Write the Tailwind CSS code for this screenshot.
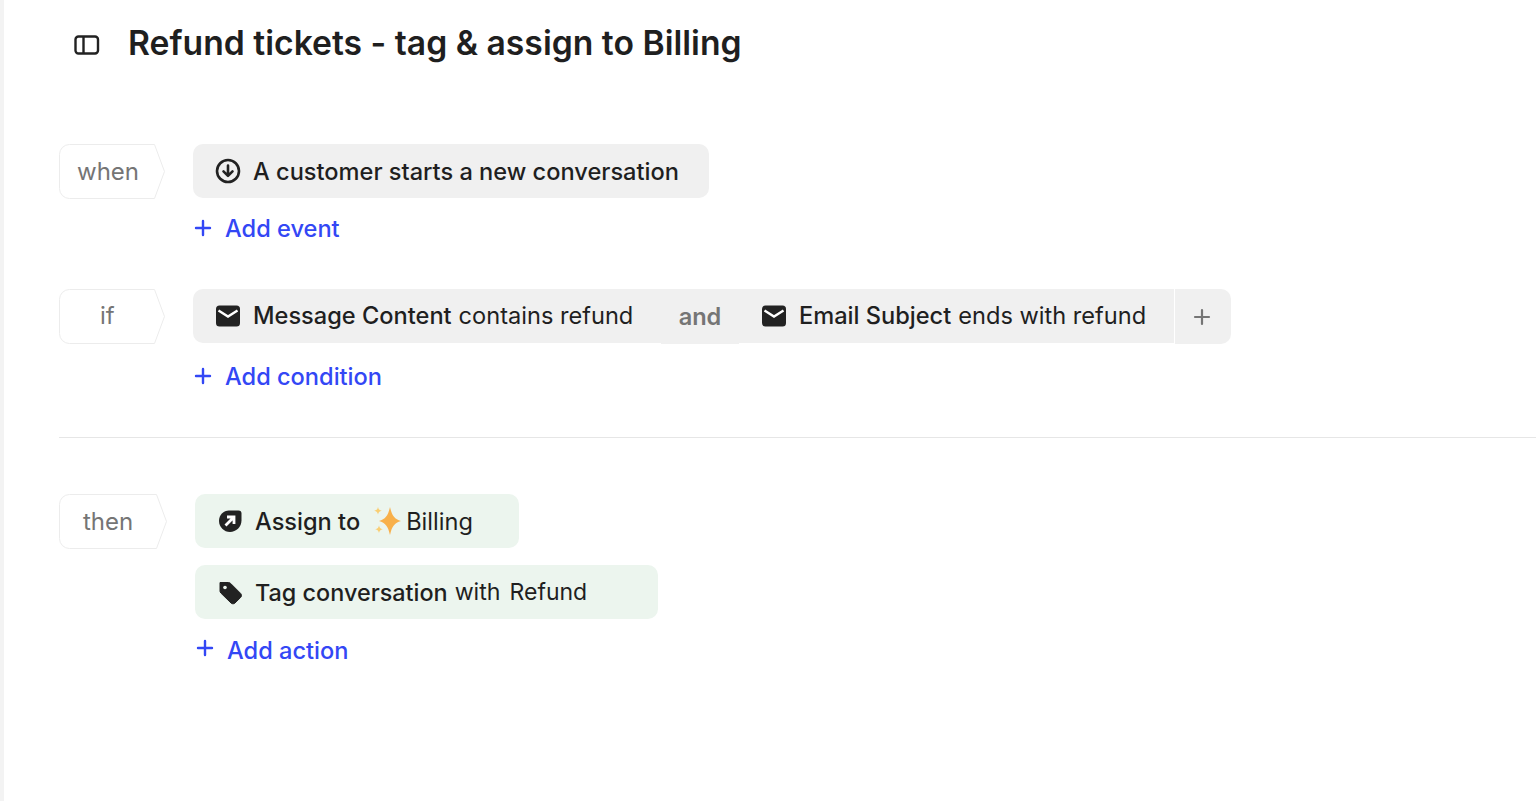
<!DOCTYPE html>
<html>
<head>
<meta charset="utf-8">
<script src="https://cdn.jsdelivr.net/npm/@tailwindcss/browser@4"></script>
</head>
<body class="bg-white font-['Inter',sans-serif] text-[#1f1f1f] overflow-hidden">
<div class="h-[801px] w-[1536px] overflow-hidden border-l-4 border-[#f3f3f3] pl-[55px]">
  <header class="flex h-[88px] items-center pl-[15px]">
    <svg class="mr-[28px] h-6 w-[26px] shrink-0 mt-[1px]" viewBox="0 0 26 24" fill="none" stroke="#222" stroke-width="2.4"><rect x="1.500" y="3.500" width="22.500" height="17" rx="3"/><path d="M9.500 3.500v17"/></svg>
    <h1 class="-mt-[2px] text-[33.7px] font-semibold leading-none whitespace-nowrap">Refund tickets - tag &amp; assign to Billing</h1>
  </header>

  <section class="mt-[56px] flex items-start">
    <div class="relative flex h-[55px] w-[106px] shrink-0 items-center pl-[18px] text-[24px] text-[#757575]">
      <svg class="absolute inset-0" width="106" height="55" viewBox="0 0 106 55" fill="none"><path d="M10.500 .5H95.500L105.500 27.500L95.500 54.500H10.500A10 10 0 0 1 .5 44.500V10.500A10 10 0 0 1 10.500 .5Z" fill="#fff" stroke="#ececec"/></svg>
      <span class="relative">when</span>
    </div>
    <div class="ml-[28px]">
      <div class="flex h-[54px] w-[516px] items-center rounded-[10px] bg-[#f0f0f0] pl-[22px] text-[23.6px] leading-none">
        <svg class="mr-[12px] h-[26px] w-[26px] shrink-0" viewBox="0 0 26 26" fill="none" stroke="#222"><circle cx="13" cy="13" r="11" stroke-width="2.600"/><path d="M13 7.500v10M8.500 13.300l4.500 4.500 4.500-4.500" stroke-width="2.600" stroke-linecap="round" stroke-linejoin="round"/></svg>
        <span class="mt-[1px] font-medium whitespace-nowrap">A customer starts a new conversation</span>
      </div>
      <div class="mt-[15px] flex h-[32px] items-center text-[23.6px] font-medium text-[#3347f5]">
        <svg class="ml-[1px] mr-[13px] -mt-[3px] h-[18px] w-[18px]" viewBox="0 0 18 18" stroke="currentColor" stroke-width="2.400" stroke-linecap="round"><path d="M9 2v14M2 9h14"/></svg>
        <span>Add event</span>
      </div>
    </div>
  </section>

  <section class="mt-[44px] flex items-start">
    <div class="relative flex h-[55px] w-[106px] shrink-0 items-center pl-[41px] text-[24px] text-[#757575]">
      <svg class="absolute inset-0" width="106" height="55" viewBox="0 0 106 55" fill="none"><path d="M10.500 .5H95.500L105.500 27.500L95.500 54.500H10.500A10 10 0 0 1 .5 44.500V10.500A10 10 0 0 1 10.500 .5Z" fill="#fff" stroke="#ececec"/></svg>
      <span class="relative -mt-[1px]">if</span>
    </div>
    <div class="ml-[28px]">
      <div class="flex h-[55px] items-start text-[23.6px] leading-none">
        <div class="flex h-[54px] w-[468px] items-center rounded-l-[10px] bg-[#f0f0f0] pl-[22px] whitespace-nowrap">
          <svg class="mr-[12px] h-[26px] w-[26px] shrink-0" viewBox="0 0 26 26"><rect x="1" y="2.500" width="24" height="21" rx="3.500" fill="#222"/><path d="M3.500 7.500L13 13.500L22.500 7.500" fill="none" stroke="#fff" stroke-width="2.400"/></svg>
          <span class="font-medium">Message Content</span><span class="ml-[7px]">contains refund</span>
        </div>
        <div class="flex h-[55px] w-[78px] items-center justify-center bg-[#f0f0f0] font-semibold text-[#757575]">and</div>
        <div class="flex h-[54px] w-[435px] items-center bg-[#f0f0f0] pl-[22px] whitespace-nowrap">
          <svg class="mr-[12px] h-[26px] w-[26px] shrink-0" viewBox="0 0 26 26"><rect x="1" y="2.500" width="24" height="21" rx="3.500" fill="#222"/><path d="M3.500 7.500L13 13.500L22.500 7.500" fill="none" stroke="#fff" stroke-width="2.400"/></svg>
          <span class="font-medium">Email Subject</span><span class="ml-[7px]">ends with refund</span>
        </div>
        <div class="ml-[1px] flex h-[55px] w-[56px] items-center justify-center rounded-r-[10px] bg-[#f0f0f0]">
          <svg class="h-[18px] w-[18px] -ml-[2px]" viewBox="0 0 18 18" stroke="#757575" stroke-width="2.200" stroke-linecap="round"><path d="M9 2v14M2 9h14"/></svg>
        </div>
      </div>
      <div class="mt-[17px] flex h-[32px] items-center text-[23.6px] font-medium text-[#3347f5]">
        <svg class="ml-[1px] mr-[13px] -mt-[2px] h-[18px] w-[18px]" viewBox="0 0 18 18" stroke="currentColor" stroke-width="2.400" stroke-linecap="round"><path d="M9 2v14M2 9h14"/></svg>
        <span>Add condition</span>
      </div>
    </div>
  </section>

  <hr class="mt-[44px] border-0 border-t border-[#e6e6e6]">

  <section class="mt-[56px] flex items-start">
    <div class="relative flex h-[55px] w-[108px] shrink-0 items-center pl-[24px] text-[24px] text-[#757575]">
      <svg class="absolute inset-0" width="108" height="55" viewBox="0 0 108 55" fill="none"><path d="M10.500 .5H97.500L107.500 27.500L97.500 54.500H10.500A10 10 0 0 1 .5 44.500V10.500A10 10 0 0 1 10.500 .5Z" fill="#fff" stroke="#ececec"/></svg>
      <span class="relative">then</span>
    </div>
    <div class="ml-[28px] text-[23.6px] leading-none">
      <div class="flex h-[54px] w-[324px] items-center rounded-[10px] bg-[#ecf5ee] pl-[22px] whitespace-nowrap">
        <svg class="mr-[12px] h-[26px] w-[26px] shrink-0" viewBox="0 0 26 26"><path d="M12 2.500H21.500A3 3 0 0 1 24.500 5.500V12.500C24.500 19 19 24 13 24C7 24 2 19 2 13C2 7 6.500 2.500 12 2.500Z" fill="#222"/><path d="M8.500 17.500L16.500 9.500M10 9H17V16" fill="none" stroke="#fff" stroke-width="2.800"/></svg>
        <span class="mt-[1px] font-medium">Assign to</span>
        <svg class="ml-[13px] mr-[5px] h-[28px] w-[28px] shrink-0" viewBox="0 0 28 28" fill="#f8b04a"><path d="M17 0C19 9 21.500 12 28 14C21.500 16 19 19 17 28C15 19 12.500 16 6 14C12.500 12 15 9 17 0Z"/><path d="M5 0C5.600 2.500 6.200 3.100 8.800 3.700C6.200 4.300 5.600 5 5 7.400C4.400 5 3.800 4.300 1.200 3.700C3.800 3.100 4.400 2.500 5 0Z" fill="#f9ce73"/><path d="M6 18.500C6.600 21 7.200 21.600 9.800 22.200C7.200 22.800 6.600 23.500 6 25.900C5.400 23.500 4.800 22.800 2.200 22.200C4.800 21.600 5.400 21 6 18.500Z" fill="#f9ce73"/></svg>
        <span class="mt-[1px]">Billing</span>
      </div>
      <div class="mt-[17px] flex h-[54px] w-[463px] items-center rounded-[10px] bg-[#ecf5ee] pl-[22px] whitespace-nowrap">
        <svg class="mr-[12px] h-[26px] w-[26px] shrink-0" viewBox="0 0 26 26"><path d="M3 3.500H11.500C12.300 3.500 13 3.800 13.600 4.400L23.600 14.400C24.800 15.600 24.800 17.400 23.600 18.500L18 24C16.900 25.100 15.100 25.100 14 24L3.800 14C3.300 13.400 3 12.700 3 12Z" fill="#222" stroke="#222" stroke-linejoin="round"/><circle cx="8" cy="8.500" r="1.800" fill="#ecf5ee"/></svg>
        <span class="mt-[1px] font-medium text-[23.4px]">Tag conversation</span><span class="mt-[1px] ml-[7px] text-[23.2px]">with</span><span class="mt-[1px] ml-[9px] text-[23px]">Refund</span>
      </div>
      <div class="mt-[16px] flex h-[32px] items-center font-medium text-[#3347f5]">
        <svg class="ml-[1px] mr-[13px] h-[18px] w-[18px] -mt-[7px]" viewBox="0 0 18 18" stroke="currentColor" stroke-width="2.400" stroke-linecap="round"><path d="M9 2v14M2 9h14"/></svg>
        <span>Add action</span>
      </div>
    </div>
  </section>
</div>
</body>
</html>
